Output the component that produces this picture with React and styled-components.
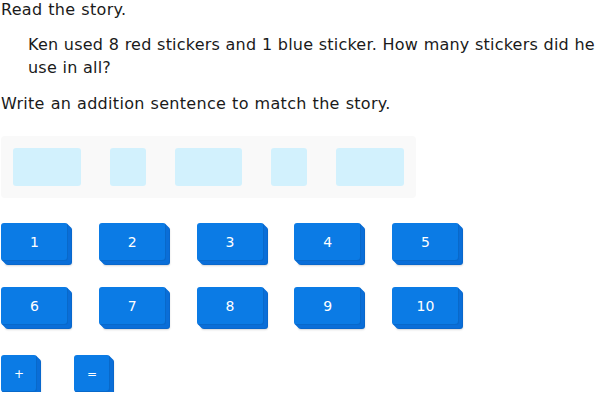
import React from "react"
import styled, { createGlobalStyle } from "styled-components"

const GlobalStyle = createGlobalStyle`
  body {
    margin: 0;
    background: #fff;
    font-family: "DejaVu Sans", Verdana, sans-serif;
    color: #1a1a1a;
    overflow: hidden;
  }
`

const numbers = [1, 2, 3, 4, 5, 6, 7, 8, 9, 10]
const slots = ["wide", "narrow", "wide", "narrow", "wide"]

const App = () => (
  <Page>
    <GlobalStyle />
    <Prompt>Read the story.</Prompt>
    <Story>
      Ken used 8 red stickers and 1 blue sticker. How many stickers did he
      use in all?
    </Story>
    <Instruction>Write an addition sentence to match the story.</Instruction>
    <AnswerPanel>
      {slots.map((s, i) => (
        <Slot key={i} $wide={s === "wide"} />
      ))}
    </AnswerPanel>
    <Tiles>
      {numbers.map(n => (
        <Tile key={n}>{n}</Tile>
      ))}
    </Tiles>
    <Operators>
      <Tile $small>+</Tile>
      <Tile $small>=</Tile>
    </Operators>
  </Page>
)

export default App

const Page = styled.div`
  width: 600px;
  padding-left: 1px;
  box-sizing: border-box;
`

const Text = styled.p`
  margin: 0;
  font-size: 16px;
  letter-spacing: 0.3px;
  word-spacing: 0.5px;
`

const Prompt = styled(Text)``

const Story = styled(Text)`
  margin-top: 14px;
  padding-left: 27px;
  line-height: 23px;
  letter-spacing: 0.2px;
  word-spacing: 0.3px;
`

const Instruction = styled(Text)`
  margin-top: 15px;
`

const AnswerPanel = styled.div`
  margin-top: 23px;
  width: 415px;
  box-sizing: border-box;
  padding: 12px;
  display: flex;
  gap: 29px;
  background: #f9f9f9;
  border-radius: 4px;
`

const Slot = styled.div`
  width: ${p => (p.$wide ? "68px" : "36px")};
  height: 38px;
  background: #d2f1fd;
  border-radius: 3px;
`

const Tiles = styled.div`
  margin-top: 25px;
  display: grid;
  grid-template-columns: repeat(5, 67px);
  column-gap: 30.75px;
  row-gap: 26px;
`

const Operators = styled.div`
  margin-top: 30px;
  display: flex;
  gap: 37px;
`

const Tile = styled.div`
  width: ${p => (p.$small ? "36px" : "67px")};
  height: ${p => (p.$small ? "37px" : "38px")};
  display: flex;
  align-items: center;
  justify-content: center;
  background: #0b7be5;
  color: #fff;
  font-size: ${p => (p.$small ? "12px" : "14px")};
  border-radius: 3px;
  box-shadow:
    inset -1px -1px 0 rgba(0, 40, 110, 0.22),
    1px 1px 0 #0a6ed8,
    2px 2px 0 #0a6ed8,
    3px 3px 0 #0a6ed8,
    4px 4px 0 #0967cc,
    4px 5px 2px rgba(0, 0, 0, 0.16);
`
